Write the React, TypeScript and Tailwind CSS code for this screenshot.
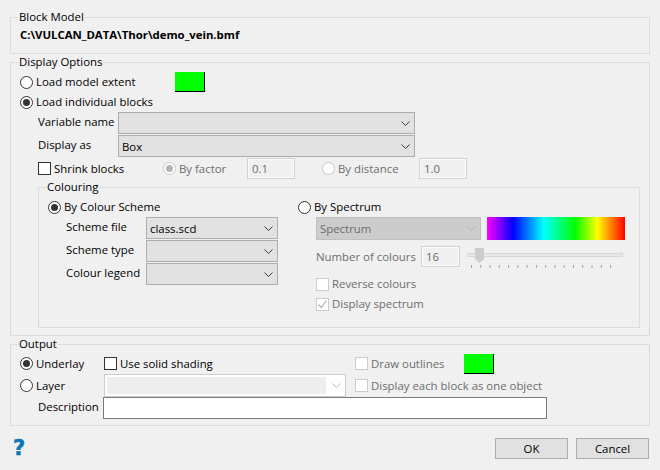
import type { ReactNode } from 'react';

const Chevron = ({ muted = false }: { muted?: boolean }) => (
  <svg width="9" height="5" viewBox="0 0 9 5" className="shrink-0">
    <path d="M0.5 0.5 L4.5 4.5 L8.5 0.5" fill="none" stroke={muted ? '#b4b4b4' : '#3c3c3c'} strokeWidth="1" />
  </svg>
);

const Radio = ({ checked = false, disabled = false }: { checked?: boolean; disabled?: boolean }) => (
  <span
    className={`flex h-[13px] w-[13px] shrink-0 items-center justify-center rounded-full border bg-white ${
      disabled ? 'border-[#c8c8c8]' : 'border-[#333333]'
    }`}
  >
    {checked && <span className={`h-[7px] w-[7px] rounded-full ${disabled ? 'bg-[#b4b4b4]' : 'bg-[#333333]'}`} />}
  </span>
);

const Check = ({ checked = false, disabled = false }: { checked?: boolean; disabled?: boolean }) => (
  <span
    className={`flex h-[13px] w-[13px] shrink-0 items-center justify-center border bg-white ${
      disabled ? 'border-[#cccccc]' : 'border-[#333333]'
    }`}
  >
    {checked && (
      <svg width="11" height="11" viewBox="0 0 11 11">
        <path d="M1.5 5.5 L4.2 8.5 L9.5 1.5" fill="none" stroke="#b0b0b0" strokeWidth="1.2" />
      </svg>
    )}
  </span>
);

const Label = ({ children, disabled = false }: { children: ReactNode; disabled?: boolean }) => (
  <span className={`whitespace-nowrap ${disabled ? 'text-[#6d6d6d]' : 'text-black'}`}>{children}</span>
);

const Select = ({ value = '', className = '' }: { value?: string; className?: string }) => (
  <div className={`flex h-[22px] items-center justify-between border border-[#adadad] bg-[#e1e1e1] pr-1 pl-[3px] ${className}`}>
    <span className="pt-px">{value}</span>
    <Chevron />
  </div>
);

const Swatch = () => <div className="h-5 w-[30px] shrink-0 border-r border-b border-black bg-[#00ff00]" />;

const Box = ({ title, className = '', children }: { title: string; className?: string; children: ReactNode }) => (
  <div className={`relative border border-[#dcdcdc] ${className}`}>
    <span className="absolute top-[-9px] left-[7px] bg-[#f0f0f0] px-px leading-4">{title}</span>
    {children}
  </div>
);

const DisabledInput = ({ value, className = '' }: { value: string; className?: string }) => (
  <div className={`flex items-center border border-[#d0d0d0] pl-1 text-[#6d6d6d] shadow-[inset_0_0_0_1px_#fbfbfb] ${className}`}>{value}</div>
);

export default function App() {
  return (
    <div
      className="flex h-[470px] w-[660px] flex-col overflow-hidden bg-[#f0f0f0] px-2.5 pt-[17px] text-[11.4px] text-black"
      style={{ fontFamily: '"Open Sans", "Noto Sans", sans-serif' }}
    >
      <Box title="Block Model" className="h-[37px] w-[640px] pt-[9px] pl-[9px]">
        <div className="leading-4 font-bold tracking-[-0.03px]">C:\VULCAN_DATA\Thor\demo_vein.bmf</div>
      </Box>

      <Box title="Display Options" className="mt-2 h-[274px] w-[640px] pt-[9px] pl-[9px]">
        <div className="flex h-5 items-center">
          <Radio />
          <span className="ml-[3px] w-[139px]">Load model extent</span>
          <Swatch />
        </div>
        <div className="flex h-5 items-center">
          <Radio checked />
          <span className="ml-[3px]">Load individual blocks</span>
        </div>

        <div className="ml-[18px]">
          <div className="flex items-center">
            <span className="w-20 pb-0.5">Variable name</span>
            <Select className="w-[297px]" />
          </div>
          <div className="mt-px flex items-center">
            <span className="w-20 pb-0.5">Display as</span>
            <Select value="Box" className="w-[297px]" />
          </div>
          <div className="mt-px flex h-[21px] items-center">
            <Check />
            <span className="ml-[3px] w-[109px]">Shrink blocks</span>
            <Radio checked disabled />
            <span className="ml-[3px] w-[68px]"><Label disabled>By factor</Label></span>
            <DisabledInput value="0.1" className="h-[21px] w-[48px]" />
            <span className="w-[27px]" />
            <Radio disabled />
            <span className="ml-[3px] w-[81px]"><Label disabled>By distance</Label></span>
            <DisabledInput value="1.0" className="h-[21px] w-[48px]" />
          </div>
        </div>

        <Box title="Colouring" className="mt-2 ml-[18px] flex h-[141px] w-[602px] pt-[9px] pl-[9px]">
          <div className="w-[250px]">
            <div className="flex h-5 items-center">
              <Radio checked />
              <span className="ml-[3px]">By Colour Scheme</span>
            </div>
            <div className="ml-[18px] flex flex-col gap-px">
              <div className="flex items-center">
                <span className="w-20 pb-0.5">Scheme file</span>
                <Select value="class.scd" className="w-[132px]" />
              </div>
              <div className="flex items-center">
                <span className="w-20 pb-0.5">Scheme type</span>
                <Select className="w-[132px]" />
              </div>
              <div className="flex items-center">
                <span className="w-20 pb-0.5">Colour legend</span>
                <Select className="w-[132px]" />
              </div>
            </div>
          </div>

          <div>
            <div className="flex h-5 items-center">
              <Radio />
              <span className="ml-[3px]">By Spectrum</span>
            </div>
            <div className="ml-[18px]">
              <div className="flex gap-1.5">
                <div className="flex h-[23px] w-[165px] items-center justify-between border border-[#c0c0c0] bg-[#cccccc] pr-1 pl-[3px] text-[#6d6d6d]">
                  <span>Spectrum</span>
                  <Chevron muted />
                </div>
                <div className="h-[23px] w-[138px] bg-[linear-gradient(to_right,#ff00ff_0%,#0000ff_19%,#00ffff_41%,#00ff00_64%,#ffff00_80%,#ff0000_100%)]" />
              </div>
              <div className="mt-1.5 flex h-[21px] items-center">
                <span className="w-[105px]"><Label disabled>Number of colours</Label></span>
                <DisabledInput value="16" className="h-[21px] w-[39px]" />
                <div className="relative ml-[7px] h-[21px] w-[156px]">
                  <div className="mt-[7px] h-1 border border-[#d6d8d6] bg-[#e7e7e7]" />
                  {/* thumb and tick marks */}
                  <svg width="156" height="23" className="absolute top-0 left-0">
                    <path d="M8 2 H17 V13 L12.5 17 L8 13 Z" fill="#cdcdcd" />
                    {Array.from({ length: 16 }, (_, i) => (
                      <rect key={i} x={4 + i * 9.27} y={19} width="1" height="3" fill="#a0a0a0" />
                    ))}
                  </svg>
                </div>
              </div>
              <div className="mt-[7px] flex h-5 items-center">
                <Check disabled />
                <span className="ml-[3px]"><Label disabled>Reverse colours</Label></span>
              </div>
              <div className="flex h-5 items-center">
                <Check checked disabled />
                <span className="ml-[3px]"><Label disabled>Display spectrum</Label></span>
              </div>
            </div>
          </div>
        </Box>
      </Box>

      <Box title="Output" className="mt-2 h-[82px] w-[640px] pt-[9px] pl-[9px]">
        <div className="flex h-5 items-center">
          <div className="flex w-[84px] items-center">
            <Radio checked />
            <span className="ml-[3px]">Underlay</span>
          </div>
          <div className="flex w-[251px] items-center">
            <Check />
            <span className="ml-[3px]">Use solid shading</span>
          </div>
          <div className="flex w-[109px] items-center">
            <Check disabled />
            <span className="ml-[3px]"><Label disabled>Draw outlines</Label></span>
          </div>
          <Swatch />
        </div>
        <div className="flex h-[23px] items-center">
          <div className="flex w-[84px] items-center">
            <Radio />
            <span className="ml-[3px]">Layer</span>
          </div>
          <div className="flex h-[23px] w-[242px] items-center justify-between border border-[#cccccc] bg-white pr-1 pl-[2px]">
            <div className="h-[17px] w-[219px] bg-[#eeeeee]" />
            <Chevron muted />
          </div>
          <div className="ml-[9px] flex items-center">
            <Check disabled />
            <span className="ml-[3px]"><Label disabled>Display each block as one object</Label></span>
          </div>
        </div>
        <div className="ml-[18px] flex items-center">
          <span className="w-[65px] pb-0.5">Description</span>
          <div className="h-[22px] w-[444px] border border-[#7a7a7a] bg-white" />
        </div>
      </Box>

      <div className="mt-3 flex w-[639px] items-start justify-between">
        <span
          className="ml-[3px] text-[21px] leading-[21px] font-bold text-[#0a78b4] [-webkit-text-stroke:0.5px_#0a78b4]"
          style={{ fontFamily: '"DejaVu Sans", sans-serif' }}
        >
          ?
        </span>
        <div className="flex gap-2">
          <button className="h-[21px] w-[73px] border border-[#adadad] bg-[#e1e1e1]">OK</button>
          <button className="h-[21px] w-[73px] border border-[#adadad] bg-[#e1e1e1]">Cancel</button>
        </div>
      </div>
    </div>
  );
}
